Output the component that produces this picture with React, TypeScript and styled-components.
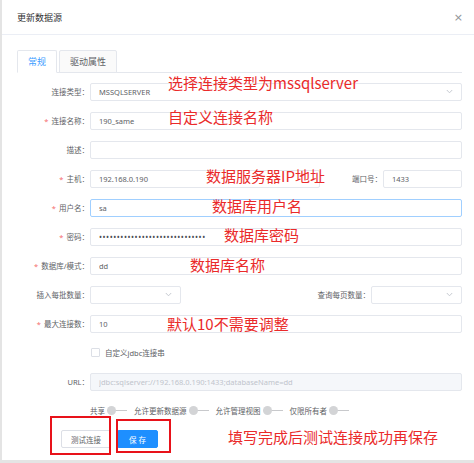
import React from 'react';
import styled, { createGlobalStyle } from 'styled-components';

const GlobalStyle = createGlobalStyle`
    html, body {
        margin: 0;
        padding: 0;
        background: #e4e4e4;
    }
    body {
        font-family: 'Noto Sans', 'Noto Sans CJK SC', sans-serif;
    }
`;

type Field = {
    label: string;
    required?: boolean;
    value?: string;
    select?: boolean;
    focused?: boolean;
    password?: boolean;
};

const fields: Field[] = [
    { label: '连接类型', value: 'MSSQLSERVER', select: true },
    { label: '连接名称', value: '190_same', required: true },
    { label: '描述', value: '' },
];

const lowerFields: Field[] = [
    { label: '用户名', value: 'sa', required: true, focused: true },
    { label: '密码', value: '•'.repeat(30), required: true, password: true },
    { label: '数据库/模式', value: 'dd', required: true },
];

const notes = [
    { text: '选择连接类型为mssqlserver', x: 168, y: 73 },
    { text: '自定义连接名称', x: 168, y: 107 },
    { text: '数据服务器IP地址', x: 206, y: 166 },
    { text: '数据库用户名', x: 212, y: 196 },
    { text: '数据库密码', x: 224, y: 225 },
    { text: '数据库名称', x: 190, y: 255 },
    { text: '默认10不需要调整', x: 167, y: 314 },
    { text: '填写完成后测试连接成功再保存', x: 228, y: 427 },
];

const switches = ['共享', '允许更新数据源', '允许管理视图', '仅限所有者'];

const Chevron = () => (
    <svg width="7" height="5" viewBox="0 0 7 5">
        <path d="M0.8 1 L3.5 3.8 L6.2 1" fill="none" stroke="#c0c4cc" strokeWidth="0.9" />
    </svg>
);

const LabelText = ({ label, required }: { label: string; required?: boolean }) => (
    <>
        {required && <Star>*</Star>}
        {label}：
    </>
);

const App = (): JSX.Element => {
    return (
        <>
            <GlobalStyle />
            <Page>
                <Modal>
                    <Header>
                        <Title>更新数据源</Title>
                        <CloseBtn>×</CloseBtn>
                    </Header>
                    <Body>
                        <TabBar>
                            <Tab active>常规</Tab>
                            <Tab>驱动属性</Tab>
                        </TabBar>
                        <Form>
                            {fields.map((f) => (
                                <Row key={f.label}>
                                    <Label>
                                        <LabelText label={f.label} required={f.required} />
                                    </Label>
                                    <Input>
                                        <Value>{f.value}</Value>
                                        {f.select && <Chevron />}
                                    </Input>
                                </Row>
                            ))}
                            <Row>
                                <Label>
                                    <LabelText label="主机" required />
                                </Label>
                                <Input>
                                    <Value>192.168.0.190</Value>
                                </Input>
                                <Label width={63}>端口号：</Label>
                                <Input width={79} grow={false}>
                                    <Value>1433</Value>
                                </Input>
                            </Row>
                            {lowerFields.map((f) => (
                                <Row key={f.label}>
                                    <Label>
                                        <LabelText label={f.label} required={f.required} />
                                    </Label>
                                    <Input focused={f.focused}>
                                        <Value dots={f.password}>{f.value}</Value>
                                    </Input>
                                </Row>
                            ))}
                            <Row split>
                                <Group>
                                    <Label>插入每批数量：</Label>
                                    <Input width={91} grow={false}>
                                        <Value />
                                        <Chevron />
                                    </Input>
                                </Group>
                                <Group>
                                    <Label width={0}>查询每页数量：</Label>
                                    <Input width={91} grow={false}>
                                        <Value />
                                        <Chevron />
                                    </Input>
                                </Group>
                            </Row>
                            <Row>
                                <Label>
                                    <LabelText label="最大连接数" required />
                                </Label>
                                <Input>
                                    <Value>10</Value>
                                </Input>
                            </Row>
                            <Row>
                                <Label />
                                <CheckBox />
                                <CheckText>自定义jdbc连接串</CheckText>
                            </Row>
                            <Row>
                                <Label>URL：</Label>
                                <Input disabled>
                                    <Value muted>jdbc:sqlserver://192.168.0.190:1433;databaseName=dd</Value>
                                </Input>
                            </Row>
                            <SwitchRow>
                                {switches.map((s) => (
                                    <SwitchItem key={s}>
                                        {s}
                                        <Switch>
                                            <Knob />
                                        </Switch>
                                    </SwitchItem>
                                ))}
                            </SwitchRow>
                            <Footer>
                                <Button>测试连接</Button>
                                <Button primary>保 存</Button>
                            </Footer>
                        </Form>
                    </Body>
                </Modal>
                {notes.map((n) => (
                    <Note key={n.text} style={{ left: n.x, top: n.y }}>
                        {n.text}
                    </Note>
                ))}
                <Mark style={{ left: 50, top: 416, width: 61, height: 39 }} />
                <Mark style={{ left: 116, top: 419, width: 55, height: 34 }} />
            </Page>
        </>
    );
};

const Page = styled.div`
    position: relative;
    width: 474px;
    height: 463px;
    overflow: hidden;
`;

const Modal = styled.div`
    margin-left: 2px;
    width: 472px;
    height: 460px;
    background: #fff;
    display: flex;
    flex-direction: column;
`;

const Header = styled.div`
    height: 34px;
    display: flex;
    align-items: center;
    justify-content: space-between;
    padding: 0 11px 0 15px;
    border-bottom: 1px solid #ebeef5;
`;

const Title = styled.div`
    font-size: 9px;
    color: #303133;
`;

const CloseBtn = styled.div`
    font-family: 'DejaVu Sans', sans-serif;
    font-size: 11px;
    color: #909399;
    line-height: 1;
`;

const Body = styled.div`
    padding: 15px 12px 0 15px;
`;

const TabBar = styled.div`
    display: flex;
    height: 22px;
    border-bottom: 1px solid #e4e7ed;
`;

const Tab = styled.div<{ active?: boolean }>`
    display: flex;
    align-items: center;
    justify-content: center;
    padding: 0 10px;
    margin-right: 2px;
    font-size: 9px;
    color: ${({ active }) => (active ? '#409eff' : '#606266')};
    background: ${({ active }) => (active ? '#fff' : '#fafafa')};
    border: 1px solid #e4e7ed;
    border-bottom-color: ${({ active }) => (active ? '#fff' : '#e4e7ed')};
    border-radius: 2px 2px 0 0;
    margin-bottom: -1px;
`;

const Form = styled.div`
    margin-top: 4px;
    display: flex;
    flex-direction: column;
`;

const Row = styled.div<{ split?: boolean }>`
    height: 29px;
    display: flex;
    align-items: center;
    justify-content: ${({ split }) => (split ? 'space-between' : 'flex-start')};
`;

const Group = styled.div`
    display: flex;
    align-items: center;
`;

const Label = styled.div<{ width?: number }>`
    flex: 0 0 auto;
    width: ${({ width }) => (width === undefined ? '73px' : width === 0 ? 'auto' : `${width}px`)};
    padding-right: 1px;
    box-sizing: border-box;
    text-align: right;
    font-size: 7.5px;
    color: #606266;
    white-space: nowrap;
`;

const Star = styled.span`
    color: #f56c6c;
    margin-right: 3px;
`;

const Input = styled.div<{ width?: number; grow?: boolean; focused?: boolean; disabled?: boolean }>`
    flex: ${({ grow = true }) => (grow ? '1 1 0' : '0 0 auto')};
    width: ${({ width }) => (width ? `${width}px` : 'auto')};
    height: 18px;
    box-sizing: border-box;
    display: flex;
    align-items: center;
    padding: 0 8px;
    border: 1px solid ${({ focused }) => (focused ? '#a0cfff' : '#e4e7ed')};
    border-radius: 2px;
    background: ${({ disabled }) => (disabled ? '#f5f7fa' : '#fff')};
`;

const Value = styled.span<{ muted?: boolean; dots?: boolean }>`
    flex: 1;
    font-size: ${({ dots }) => (dots ? '8px' : '7.5px')};
    letter-spacing: ${({ dots }) => (dots ? '0.55px' : '0')};
    color: ${({ muted, dots }) => (muted ? '#c0c4cc' : dots ? '#4a4d52' : '#606266')};
    white-space: nowrap;
    overflow: hidden;
`;

const CheckBox = styled.div`
    width: 9px;
    height: 9px;
    margin-left: 1px;
    box-sizing: border-box;
    border: 1px solid #dcdfe6;
    border-radius: 1px;
`;

const CheckText = styled.span`
    margin-left: 5px;
    font-size: 7.5px;
    color: #606266;
`;

const SwitchRow = styled.div`
    height: 29px;
    display: flex;
    align-items: center;
    padding-left: 73px;
    gap: 7px;
`;

const SwitchItem = styled.div`
    display: flex;
    align-items: center;
    font-size: 7.5px;
    color: #606266;
    gap: 2px;
`;

const Switch = styled.div`
    position: relative;
    width: 20px;
    height: 9px;
    display: flex;
    align-items: center;
    &::before {
        content: '';
        display: block;
        width: 100%;
        height: 1px;
        background: #c8c9cc;
    }
`;

const Knob = styled.div`
    position: absolute;
    left: 0;
    top: 0;
    width: 9px;
    height: 9px;
    border-radius: 50%;
    background: #d3d4d6;
`;

const Footer = styled.div`
    height: 28px;
    display: flex;
    align-items: center;
    padding-left: 44px;
    gap: 6px;
`;

const Button = styled.div<{ primary?: boolean }>`
    height: 18px;
    padding: 0 ${({ primary }) => (primary ? '11px' : '9px')};
    display: flex;
    align-items: center;
    font-size: 7.5px;
    border-radius: 2px;
    box-sizing: border-box;
    color: ${({ primary }) => (primary ? '#fff' : '#606266')};
    background: ${({ primary }) => (primary ? '#1e8fff' : '#fff')};
    border: 1px solid ${({ primary }) => (primary ? '#1e8fff' : '#dcdfe6')};
`;

const Note = styled.div`
    position: absolute;
    font-family: 'Noto Sans CJK SC', 'Noto Sans', sans-serif;
    font-size: 15px;
    line-height: 20px;
    color: #ea2a2a;
    white-space: nowrap;
`;

const Mark = styled.div`
    position: absolute;
    box-sizing: border-box;
    border: 2px solid #e8121a;
`;

export default App;
